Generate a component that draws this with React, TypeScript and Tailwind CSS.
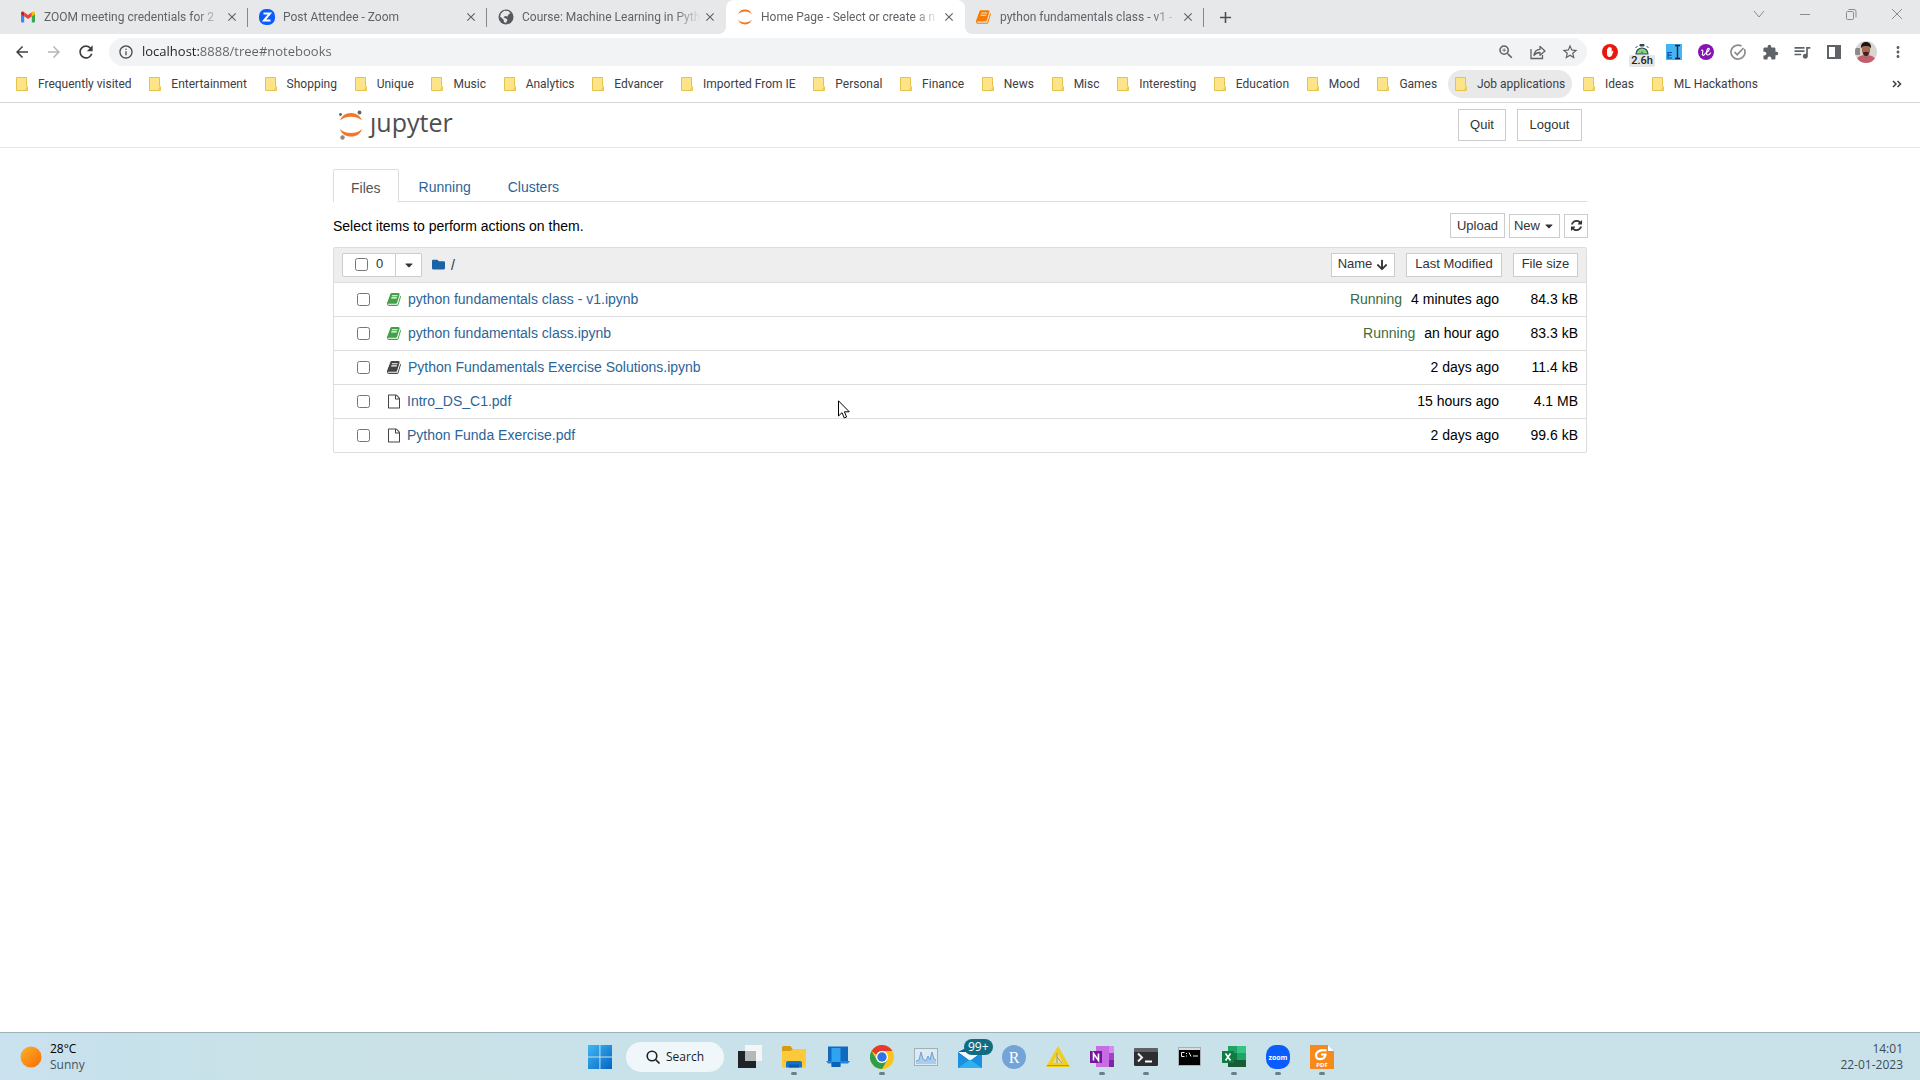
import { useState } from "react";
import type { ReactNode } from "react";
import clsx from "clsx";
import { FaArrowDown, FaCaretDown, FaFolder } from "react-icons/fa";
import {
  MdAdd,
  MdArrowBack,
  MdArrowForward,
  MdClose,
  MdExtension,
  MdInfoOutline,
  MdMoreVert,
  MdPublic,
  MdQueueMusic,
  MdRefresh,
  MdStarBorder,
  MdZoomIn,
} from "react-icons/md";

/* ---------- icons ---------- */

const BOOK =
  "M1639 478q40 57 18 129l-275 906q-19 64-76.5 107.5t-122.5 43.5h-923q-77 0-148.5-53.5t-99.5-131.5q-24-67-2-127 0-4 3-27t4-37q1-8-3-21.5t-3-19.5q2-11 8-21t16.5-23.5 16.5-23.5q23-38 45-91.5t30-91.5q3-10 .5-30t-.5-28q3-11 17-28t17-23q21-36 42-92t25-90q1-9-2.5-32t.5-28q4-13 22-30.5t22-22.5q19-26 42.5-84.5t27.5-96.5q1-8-3-25.5t-2-26.5q2-8 9-18t18-23 17-21q8-12 16.5-30.5t15-35 16-36 19.5-32 26.5-23.5 36-11.5 47.5 5.5l-1 3q38-9 51-9h761q74 0 114 56t18 130l-274 906q-36 119-71.5 153.5t-128.5 34.5h-869q-27 0-38 15-11 16-1 43 24 70 144 70h923q29 0 56-15.5t35-41.5l300-987q7-22 5-57 38 15 59 43zm-1064 2q-4 13 2 22.5t20 9.5h608q13 0 25.5-9.5t16.5-22.5l21-64q4-13-2-22.5t-20-9.5h-608q-13 0-25.5 9.5t-16.5 22.5zm-83 256q-4 13 2 22.5t20 9.5h608q13 0 25.5-9.5t16.5-22.5l21-64q4-13-2-22.5t-20-9.5h-608q-13 0-25.5 9.5t-16.5 22.5z";
const FILE =
  "M1596 380q28 28 48 76t20 88v1152q0 40-28 68t-68 28h-1344q-40 0-68-28t-28-68v-1600q0-40 28-68t68-28h896q40 0 88 20t76 48zm-444-244v376h376q-10-29-22-41l-313-313q-12-12-41-22zm384 1528v-1024h-416q-40 0-68-28t-28-68v-416h-768v1536h1280z";
const REFRESH =
  "M1639 1056q0 5-1 7-64 268-268 434.5t-478 166.5q-146 0-282.5-55t-243.5-157l-129 129q-19 19-45 19t-45-19-19-45v-448q0-26 19-45t45-19h448q26 0 45 19t19 45-19 45l-137 137q71 66 161 102t187 36q134 0 250-65t186-179q11-17 53-117 8-23 30-23h192q13 0 22.5 9.5t9.5 22.5zm25-800v448q0 26-19 45t-45 19h-448q-26 0-45-19t-19-45 19-45l138-138q-148-137-349-137-134 0-250 65t-186 179q-11 17-53 117-8 23-30 23h-199q-13 0-22.5-9.5t-9.5-22.5v-7q65-268 270-434.5t480-166.5q146 0 284 55.5t245 156.5l130-129q19-19 45-19t45 19 19 45z";

function Glyph({ d, className }: { d: string; className: string }) {
  return (
    <svg viewBox="0 0 1792 1792" fill="currentColor" className={className}>
      <path d={d} />
    </svg>
  );
}

function GmailIcon() {
  return (
    <svg viewBox="0 0 16 16" className="size-4 shrink-0">
      <path d="M1 4.500v8.200c0 .5.3.8.8.8h2.400V6.800z" fill="#4285f4" />
      <path d="M15 4.500v8.200c0 .5-.3.8-.8.8h-2.400V6.800z" fill="#34a853" />
      <path d="M4.200 3.200v4L8 10l3.800-2.800v-4L8 6z" fill="#ea4335" />
      <path d="M1 4.300v1L4.200 7.500V3.400l-.8-.6C2.400 2.100 1 2.800 1 4.300z" fill="#c5221f" />
      <path d="M15 4.300v1L11.800 7.500V3.400l.8-.6c1-.7 2.400 0 2.400 1.500z" fill="#fbbc04" />
    </svg>
  );
}

function ZoomFavicon() {
  return (
    <svg viewBox="0 0 16 16" className="size-4 shrink-0">
      <rect width="16" height="16" rx="7" fill="#0b5cff" />
      <path d="M4.500 4.500h6.500L5 11.500h6.500" fill="none" stroke="#fff" strokeWidth="2" />
    </svg>
  );
}

function GlobeFavicon() {
  return (
    <svg viewBox="0 0 16 16" className="size-4 shrink-0">
      <circle cx="8" cy="8" r="7.500" fill="#55595d" />
      <path d="M6 1.800l4 .2 2.500 2-2 1.500-1 2L7 7 5.500 8.500 8 9.500l1.500 1.200L8 14l-2-1-.5-2.500L2 7.500 3 4.500z" fill="#e7e8ea" />
    </svg>
  );
}

function JupyterFavicon() {
  return (
    <svg viewBox="0 0 16 16" className="size-4 shrink-0" fill="#f37726">
      <path d="M1 5.500C2.500 1.800 5 .6 8 .6s5.500 1.200 7 4.900C13 3.300 10.800 2.500 8 2.500s-5 .8-7 3z" />
      <path d="M1 10.500c1.500 3.700 4 4.900 7 4.900s5.500-1.200 7-4.900c-2 2.200-4.200 3-7 3s-5-.8-7-3z" />
    </svg>
  );
}

function JupyterLogo() {
  return (
    <svg viewBox="0 0 26 30" className="h-[30px] w-[26px]">
      <path d="M2 10.500C3.500 6 7.500 3 13 3s9.500 3 11 7.500C21.500 8 17.500 6.700 13 6.700S4.500 8 2 10.500z" fill="#f37726" />
      <path d="M2 19c1.500 5 5.500 7.500 11 7.500s9.500-2.500 11-7.500c-2.500 2.700-6.500 4-11 4s-8.500-1.300-11-4z" fill="#f37726" />
      <circle cx="2.500" cy="4.500" r="1.400" fill="#616262" />
      <circle cx="21.500" cy="2.500" r="1.900" fill="#616262" />
      <circle cx="4.500" cy="27.500" r="2.200" fill="#8a8a8a" />
    </svg>
  );
}

function ShareIcon() {
  return (
    <svg viewBox="0 0 16 16" className="size-4" fill="none" stroke="#5f6368" strokeWidth="1.300">
      <path d="M1 5v9.500h11.500V11" />
      <path d="M4 11.500c.4-4 2.600-6 6-6.200V2.500L15 7l-5 4.300V8.500c-2.600 0-4.500.8-6 3z" strokeLinejoin="round" />
    </svg>
  );
}

function FolderIcon() {
  return (
    <svg viewBox="0 0 12 14" className="h-[14px] w-3 shrink-0">
      <path d="M.5.5h10v8.500l1 1v3.500H.5z" fill="#fde488" stroke="#e5c34c" />
      <path d="M9.500 13.500V11l2-1.500v4z" fill="#f3cc50" />
    </svg>
  );
}

/* ---------- browser tabs ---------- */

const tabs = [
  { title: "ZOOM meeting credentials for 2", icon: <GmailIcon /> },
  { title: "Post Attendee - Zoom", icon: <ZoomFavicon /> },
  { title: "Course: Machine Learning in Pyth", icon: <GlobeFavicon /> },
  { title: "Home Page - Select or create a n", icon: <JupyterFavicon />, active: true },
  { title: "python fundamentals class - v1 -", icon: <Glyph d={BOOK} className="size-4 shrink-0 text-[#f57c00]" /> },
];

function TabStrip() {
  return (
    <div className="flex h-[34px] bg-[#e7e8ea] pl-[9px]">
      {tabs.map((tab, i) => (
        <div
          key={tab.title}
          className={clsx(
            "relative flex w-[239px] items-center gap-2 pr-[9px] pl-[11px]",
            tab.active &&
              "rounded-t-lg bg-white before:absolute before:bottom-0 before:-left-2 before:size-2 before:bg-[radial-gradient(circle_at_0_0,transparent_8px,white_8px)] after:absolute after:-right-2 after:bottom-0 after:size-2 after:bg-[radial-gradient(circle_at_100%_0,transparent_8px,white_8px)]",
          )}
        >
          {tab.icon}
          <span className="-mr-[6px] min-w-0 flex-1 overflow-hidden text-xs whitespace-nowrap text-[#5f6368] [mask-image:linear-gradient(to_right,black_85%,transparent)]">
            {tab.title}
          </span>
          <button aria-label="Close tab" className="text-[#5f6368]">
            <MdClose className="size-[14px]" />
          </button>
          {!tab.active && !tabs[i + 1]?.active && (
            <span className="absolute top-2 right-0 h-[19px] w-px bg-[#85888c]" />
          )}
        </div>
      ))}
      <button aria-label="New tab" className="ml-3 text-[#4b4f53]">
        <MdAdd className="size-[19px]" />
      </button>
      <div className="ml-auto flex h-7 text-[#8b8b8b]">
        <button aria-label="Search tabs" className="grid w-[46px] place-items-center">
          <svg viewBox="0 0 12 12" className="size-3" fill="none" stroke="currentColor">
            <path d="M1 3l5 6 5-6" />
          </svg>
        </button>
        <button aria-label="Minimize" className="grid w-[46px] place-items-center">
          <svg viewBox="0 0 12 12" className="size-3" fill="none" stroke="currentColor">
            <path d="M1 6.500h10" />
          </svg>
        </button>
        <button aria-label="Restore" className="grid w-[46px] place-items-center">
          <svg viewBox="0 0 12 12" className="size-3" fill="none" stroke="currentColor">
            <rect x="1.500" y="3.500" width="7" height="8" rx="1" />
            <path d="M3.500 1.500h5.500q2 0 2 2v6" />
          </svg>
        </button>
        <button aria-label="Close" className="grid w-[46px] place-items-center">
          <svg viewBox="0 0 12 12" className="size-3" fill="none" stroke="currentColor">
            <path d="M1 1l10 10M11 1L1 11" />
          </svg>
        </button>
      </div>
    </div>
  );
}

/* ---------- toolbar ---------- */

function ToolButton({ label, children }: { label: string; children: ReactNode }) {
  return (
    <button aria-label={label} className="relative grid h-7 w-8 shrink-0 place-items-center text-[#5f6368]">
      {children}
    </button>
  );
}

function Toolbar() {
  const [url, setUrl] = useState("localhost:8888/tree#notebooks");

  return (
    <div className="flex h-9 items-center bg-white px-[6px]">
      <ToolButton label="Back">
        <MdArrowBack className="size-[18px] text-[#3c4043]" />
      </ToolButton>
      <ToolButton label="Forward">
        <MdArrowForward className="size-[18px] text-[#b4b6b8]" />
      </ToolButton>
      <ToolButton label="Reload">
        <MdRefresh className="size-5 text-[#3c4043]" />
      </ToolButton>
      <div className="mx-[7px] flex h-7 flex-1 items-center rounded-full bg-[#f1f3f4] pr-px pl-[9px]">
        <MdInfoOutline className="size-4 text-[#4b4f53]" />
        <input
          aria-label="Address"
          value={url}
          onChange={(e) => setUrl(e.target.value)}
          className="ml-2 flex-1 bg-[linear-gradient(to_right,#202124_58px,#5f6368_58px)] bg-clip-text font-['Open_Sans',sans-serif] text-[13px] text-transparent caret-black outline-none"
        />
        <ToolButton label="Zoom">
          <MdZoomIn className="size-[18px]" />
        </ToolButton>
        <ToolButton label="Share this page">
          <ShareIcon />
        </ToolButton>
        <ToolButton label="Bookmark this tab">
          <MdStarBorder className="size-[18px]" />
        </ToolButton>
      </div>
      <ToolButton label="Ad blocker">
        <svg viewBox="0 0 16 16" className="size-4">
          <circle cx="8" cy="8" r="8" fill="#e8190c" />
          <path
            d="M5 8V5.200c0-.8 1-.8 1 0V4c0-.9 1.200-.9 1.200 0v-.7c0-.9 1.300-.9 1.300 0V4c0-.8 1.200-.8 1.200 0v4l.6-1c.5-.7 1.300-.2 1 .5l-1.200 3.600c-.4 1.100-1.200 1.900-2.600 1.900C5.700 13 5 11.600 5 10z"
            fill="#fff"
          />
        </svg>
      </ToolButton>
      <ToolButton label="Time tracker">
        <svg viewBox="0 0 16 16" className="size-4">
          <path d="M2 10a6 6 0 0 1 12 0z" fill="#8fd07f" stroke="#2c4a57" strokeWidth="1.200" />
          <path d="M6 10l2-3 2 3z" fill="#2f9e4a" />
          <path d="M6 .5h4v1.500H6zM1.500 4L3.500 2M14.500 4l-2-2" stroke="#2c4a57" strokeWidth="1" fill="#2c4a57" />
        </svg>
        <span className="absolute -bottom-px rounded-[2px] bg-[#e6e6e6] px-[2px] text-[11px] leading-[12px] font-medium text-[#222]">
          2.6h
        </span>
      </ToolButton>
      <ToolButton label="Text extension">
        <svg viewBox="0 0 16 16" className="size-4" fill="none">
          <path d="M0 0h16v16H0z" fill="#45b4f3" />
          <path d="M6 8.500H2v5.500h4M2 11.200h3.500" stroke="#164a9c" strokeWidth="1.200" />
          <path d="M9 1.500h5M9 14.500h5M11.500 1.500v13" stroke="#14213a" strokeWidth="1.400" />
        </svg>
      </ToolButton>
      <ToolButton label="Writing extension">
        <svg viewBox="0 0 16 16" className="size-4" fill="none">
          <circle cx="8" cy="8" r="8" fill="#8614b4" />
          <path
            d="M3.200 6.500c1.500-1 2 .2 1.400 2.200-.8 3 1 3.500 2.300 1.300 1.500-2 3.600-2 4.300-4.500.2-1.500-1-1.700-1.800-.3-1.200 2.200-1.400 5.800.3 5.800 1.300 0 2.300-1 3.100-2.500"
            stroke="#fff"
            strokeWidth="1.200"
          />
        </svg>
      </ToolButton>
      <ToolButton label="Checker">
        <svg viewBox="0 0 16 16" className="size-4" fill="none" stroke="#8a8c8f" strokeWidth="1.700">
          <path d="M14.300 5A7 7 0 1 1 11.500 2" />
          <path d="M4.500 8l2.700 2.700L13.500 4" />
        </svg>
      </ToolButton>
      <ToolButton label="Extensions">
        <MdExtension className="size-[17px]" />
      </ToolButton>
      <ToolButton label="Media control">
        <MdQueueMusic className="size-5" />
      </ToolButton>
      <ToolButton label="Side panel">
        <svg viewBox="0 0 16 16" className="size-4">
          <path d="M1 1h14v14H1zM3 3v10h6V3z" fill="#5f6368" fillRule="evenodd" />
        </svg>
      </ToolButton>
      <ToolButton label="Profile">
        <svg viewBox="0 0 22 22" className="size-[22px]">
          <clipPath id="avatar">
            <circle cx="11" cy="11" r="11" />
          </clipPath>
          <g clipPath="url(#avatar)">
            <path d="M0 0h22v22H0z" fill="#d9d5d2" />
            <path d="M0 7h5v7H0z" fill="#8d8a86" />
            <path d="M1 22c0-6 4-8 10-8s10 2 10 8z" fill="#c0606e" />
            <ellipse cx="11" cy="9" rx="4.200" ry="5.800" fill="#a8694f" />
            <path d="M6 7.500C5.500 3 8 1 11 1s5.500 2 5 6.500C15 5.500 13.500 5 11 5S7 5.500 6 7.500z" fill="#1b1514" />
            <path d="M8 11.500c2-1 4-1 6 0 0 2-1 3.500-3 3.500s-3-1.500-3-3.500z" fill="#3a2420" />
          </g>
        </svg>
      </ToolButton>
      <ToolButton label="Menu">
        <MdMoreVert className="size-[18px]" />
      </ToolButton>
    </div>
  );
}

/* ---------- bookmarks ---------- */

const bookmarks = [
  "Frequently visited",
  "Entertainment",
  "Shopping",
  "Unique",
  "Music",
  "Analytics",
  "Edvancer",
  "Imported From IE",
  "Personal",
  "Finance",
  "News",
  "Misc",
  "Interesting",
  "Education",
  "Mood",
  "Games",
  "Job applications",
  "Ideas",
  "ML Hackathons",
];

function BookmarksBar() {
  return (
    <div className="flex items-center border-b border-[#d5d7da] bg-white pr-[18px] pb-1 pl-[9px]">
      <div className="mr-[127px] flex flex-1 justify-between">
        {bookmarks.map((name) => (
          <button
            key={name}
            className={clsx(
              "flex h-7 items-center gap-[10px] rounded-full px-[7px] text-xs whitespace-nowrap text-[#3c4043]",
              name === "Job applications" && "bg-[#e9e9ea]",
            )}
          >
            <FolderIcon />
            {name}
          </button>
        ))}
      </div>
      <button aria-label="More bookmarks">
        <svg viewBox="0 0 10 8" className="h-2 w-[10px]" fill="none" stroke="#3c4043" strokeWidth="1.500">
          <path d="M1 1l3 3-3 3M5.500 1l3 3-3 3" />
        </svg>
      </button>
    </div>
  );
}

/* ---------- notebook page ---------- */

const files = [
  { name: "python fundamentals class - v1.ipynb", kind: "notebook", running: true, modified: "4 minutes ago", size: "84.3 kB" },
  { name: "python fundamentals class.ipynb", kind: "notebook", running: true, modified: "an hour ago", size: "83.3 kB" },
  { name: "Python Fundamentals Exercise Solutions.ipynb", kind: "notebook", running: false, modified: "2 days ago", size: "11.4 kB" },
  { name: "Intro_DS_C1.pdf", kind: "file", running: false, modified: "15 hours ago", size: "4.1 MB" },
  { name: "Python Funda Exercise.pdf", kind: "file", running: false, modified: "2 days ago", size: "99.6 kB" },
];

const btn = "flex items-center justify-center border border-[#ccc] bg-white text-[13px] font-normal text-[#333]";

function FileTable() {
  return (
    <div className="mt-[9px] rounded-[2px] border border-[#ddd]">
      <table className="w-full table-fixed text-sm text-black">
        <colgroup>
          <col />
          <col className="w-[102px]" />
          <col className="w-[84px]" />
        </colgroup>
        <thead>
          <tr className="h-[34px] border-b border-[#ddd] bg-[#eee]">
            <th className="p-0">
              <div className="flex items-center pr-[5px] pl-2">
                <div className="flex">
                  <label className={clsx(btn, "h-6 w-[54px] gap-2 rounded-l-[2px]")}>
                    <input type="checkbox" className="size-[13px]" />0
                  </label>
                  <button aria-label="Select by type" className={clsx(btn, "h-6 w-[26px] rounded-r-[2px] border-l-0")}>
                    <FaCaretDown className="size-3" />
                  </button>
                </div>
                <a href="#root" aria-label="Home folder" className="ml-[10px] text-[#1a63a5]">
                  <FaFolder className="size-[13px]" />
                </a>
                <span className="ml-[6px] font-normal text-[#333]">/</span>
                <button className={clsx(btn, "ml-auto h-6 w-16 gap-1")}>
                  Name
                  <FaArrowDown className="size-3" />
                </button>
              </div>
            </th>
            <th className="p-0">
              <button className={clsx(btn, "ml-auto h-6 w-24")}>Last Modified</button>
            </th>
            <th className="p-0 pr-2">
              <button className={clsx(btn, "ml-auto h-6 w-[65px]")}>File size</button>
            </th>
          </tr>
        </thead>
        <tbody>
          {files.map((file) => (
            <tr key={file.name} className="h-[34px] border-b border-[#ddd] last:border-b-0">
              <td className="p-0">
                <div className="flex items-center pl-[23px]">
                  <input type="checkbox" aria-label={file.name} className="size-[13px]" />
                  <Glyph
                    d={file.kind === "notebook" ? BOOK : FILE}
                    className={clsx(
                      "mr-[6px] ml-[17px]",
                      file.kind === "notebook" ? "size-[15px]" : "h-[15px] w-[14px]",
                      file.running ? "text-[#43a047]" : "text-[#444]",
                    )}
                  />
                  <a href="#notebooks" className="text-[#2c6497]">
                    {file.name}
                  </a>
                </div>
              </td>
              <td className="p-0">
                <div className="flex justify-end gap-[9px] pr-[3px] whitespace-nowrap">
                  {file.running && <span className="text-[#3c6b40]">Running</span>}
                  <span>{file.modified}</span>
                </div>
              </td>
              <td className="p-0 pr-2 text-right">{file.size}</td>
            </tr>
          ))}
        </tbody>
      </table>
    </div>
  );
}

function NotebookPage() {
  return (
    <div className="flex-1 bg-white font-['Liberation_Sans',Arial,sans-serif]">
      <header className="border-b border-[#e7e7e7]">
        <div className="mx-auto flex h-11 max-w-[1254px] items-center px-[5px]">
          <a href="#tree" className="flex items-center gap-[6px] text-[#4e4e4e]">
            <JupyterLogo />
            <span className="pb-[6px] font-['Open_Sans','Noto_Sans',sans-serif] text-[25px] leading-8">
              <span className="relative before:absolute before:top-[6px] before:left-0 before:h-[6px] before:w-[7px] before:bg-white">
                j
              </span>
              upyter
            </span>
          </a>
          <button className={clsx(btn, "ml-auto h-8 w-12")}>Quit</button>
          <button className={clsx(btn, "ml-[11px] h-8 w-[65px]")}>Logout</button>
        </div>
      </header>
      <main className="mx-auto max-w-[1254px] pt-[21px]">
        <nav className="flex h-[33px] gap-[3px] border-b border-[#ddd] text-sm">
          <a href="#notebooks" className="-mb-px flex items-center rounded-t-[2px] border border-b-0 border-[#ddd] bg-white px-[17px] pt-[3px] text-[#555]">
            Files
          </a>
          <a href="#running" className="flex items-center px-[17px] pt-1 text-[#2c6497]">
            Running
          </a>
          <a href="#clusters" className="flex items-center px-[17px] pt-1 text-[#2c6497]">
            Clusters
          </a>
        </nav>
        <div className="mt-[11px] -mr-px flex items-center gap-1">
          <p className="mr-auto text-sm text-black">Select items to perform actions on them.</p>
          <button className={clsx(btn, "h-[25px] w-[55px]")}>Upload</button>
          <button className={clsx(btn, "h-6 w-[51px] gap-[3px]")}>
            New
            <FaCaretDown className="size-3" />
          </button>
          <button aria-label="Refresh" className={clsx(btn, "h-6 w-6")}>
            <Glyph d={REFRESH} className="size-[13px]" />
          </button>
        </div>
        <FileTable />
      </main>
    </div>
  );
}

/* ---------- taskbar ---------- */

function TaskButton({ label, open, children }: { label: string; open?: boolean; children: ReactNode }) {
  return (
    <button aria-label={label} className="relative grid h-[47px] w-11 place-items-center">
      <svg viewBox="0 0 24 24" className="size-6">
        {children}
      </svg>
      {open && <span className="absolute bottom-[5px] h-[3px] w-[6px] rounded-full bg-[#6b7f8a]" />}
    </button>
  );
}

function Taskbar() {
  return (
    <footer className="grid grid-cols-[1fr_auto_1fr] items-center border-t border-[#9fb1b6] bg-[linear-gradient(to_right,#cbe1ef,#c7e1ec_6%,#c9e2e7_15%,#c9e1ea_50%,#c9e2e9)] font-['Open_Sans',sans-serif] text-xs leading-4">
      <button className="flex items-center gap-2 pl-5 text-left">
        <svg viewBox="0 0 22 22" className="size-[22px]">
          <linearGradient id="sun" x1="0" y1="0" x2="1" y2="1">
            <stop stopColor="#fbb324" />
            <stop offset="1" stopColor="#f96a06" />
          </linearGradient>
          <circle cx="11" cy="11" r="10.500" fill="url(#sun)" />
        </svg>
        <span className="flex flex-col">
          <span className="text-black">28°C</span>
          <span className="text-[#46545c]">Sunny</span>
        </span>
      </button>

      <div className="flex items-center pl-[2px]">
        <TaskButton label="Start">
          <linearGradient id="win" x1="0" y1="0" x2="1" y2="1">
            <stop stopColor="#3fb8f2" />
            <stop offset="1" stopColor="#0465c4" />
          </linearGradient>
          <path d="M0 0h11.400v11.400H0zM12.400 0H24v11.400H12.400zM0 12.400h11.400V24H0zM12.400 12.400H24V24H12.400z" fill="url(#win)" />
        </TaskButton>
        <button className="mx-1 flex h-[30px] w-[98px] items-center justify-center gap-[6px] rounded-full bg-[#f0f7fb] text-[#1b1b1b]">
          <svg viewBox="0 0 14 14" className="size-[14px]" fill="none" stroke="#222" strokeWidth="1.600">
            <circle cx="6" cy="6" r="4.800" />
            <path d="M9.500 9.500L13.500 13.500" />
          </svg>
          Search
        </button>
        <TaskButton label="Task view">
          <path d="M7 0h17v16H7z" fill="#f3f5f6" />
          <path d="M0 6h18v17H0z" fill="#1f2327" />
          <path d="M7 6h11v10H7z" fill="#b5b8ba" />
        </TaskButton>
        <TaskButton label="File Explorer" open>
          <path d="M0 2.500Q0 1 1.500 1h7l2 3H24v16H0z" fill="#d99a13" />
          <path d="M0 6h8.500L11 4h12q1 0 1 1v17.500H0z" fill="#fbc93a" />
          <path d="M4 22.500V18q0-2 2-2h12q2 0 2 2v4.500z" fill="#1374c9" />
          <path d="M7 19.500h10v3H7z" fill="#0b5aa6" />
        </TaskButton>
        <TaskButton label="Phone Link">
          <path d="M2 1.500h20V17H2z" fill="#1168bd" />
          <path d="M0 16h24l-2 2.500H2z" fill="#1d86dd" />
          <path d="M5.500 3h9v18.500h-9z" fill="#2ea3f0" />
          <path d="M5.500 17h9v5h-9z" fill="#0b63b5" />
        </TaskButton>
        <TaskButton label="Chrome" open>
          <circle cx="12" cy="12" r="12" fill="#f9c51d" />
          <path d="M1.600 6A12 12 0 0 1 22.400 6H12a6 6 0 0 0-5.500 3.700z" fill="#e33b2e" />
          <path d="M1.600 6A12 12 0 0 0 12 24l5.200-9L12 18a6 6 0 0 1-5.200-3z" fill="#2f9e4a" />
          <circle cx="12" cy="12" r="6" fill="#fff" />
          <circle cx="12" cy="12" r="4.700" fill="#2f73e4" />
        </TaskButton>
        <TaskButton label="Performance Monitor">
          <rect x=".5" y="3.500" width="23" height="17" fill="#dfe9f2" stroke="#a4b0b8" />
          <path d="M2 19v-3l3-1 2-8 2 7 3 2 2-5 2 4 2-8 2 7 2 1v4z" fill="#a9cdf0" />
          <path d="M2 16l3-1 2-8 2 7 3 2 2-5 2 4 2-8 2 7 2 1" fill="none" stroke="#6ea3d8" />
        </TaskButton>
        <div className="relative">
          <TaskButton label="Mail">
            <path d="M0 7l12-6 12 6v16H0z" fill="#0a5aa8" />
            <path d="M0 7h24L12 16z" fill="#f4f9fc" />
            <path d="M0 7.500L12 16l12-8.500V23H0z" fill="#1b8fe0" />
            <path d="M0 23l12-8.500L24 23z" fill="#2fb0f0" />
          </TaskButton>
          <span className="absolute top-[6px] left-4 rounded-full bg-[#126c80] px-1 text-white">99+</span>
        </div>
        <TaskButton label="R">
          <circle cx="12" cy="12" r="12" fill="#74a3d8" />
          <text x="12" y="17.500" textAnchor="middle" fontSize="16" fontFamily="Liberation Serif, serif" fill="#fff">
            R
          </text>
        </TaskButton>
        <TaskButton label="Analyzer">
          <path d="M12 1L24 22H0z" fill="#f0cf1c" />
          <path d="M12 8l5 10H7z" fill="#e3dca8" />
          <path d="M11 8v10M11 12l5 6M1 20.500h22" stroke="#a39a55" fill="none" />
        </TaskButton>
        <TaskButton label="OneNote" open>
          <path d="M6 1h18v21H6z" fill="#c86ce4" />
          <path d="M19 1h5v7h-5z" fill="#d58bee" />
          <path d="M19 8h5v7h-5z" fill="#a341c9" />
          <path d="M19 15h5v7h-5z" fill="#7a25a8" />
          <path d="M0 6h12v12H0z" fill="#75159c" />
          <path d="M3.500 15.500V8.500L8.500 15.500V8.500" stroke="#fff" strokeWidth="1.600" fill="none" />
        </TaskButton>
        <TaskButton label="Terminal" open>
          <rect y="3" width="24" height="18" rx="1.500" fill="#2c2e31" />
          <path d="M1.500 3h21q1.500 0 1.500 1.500V7H0V4.500Q0 3 1.500 3z" fill="#5f6265" />
          <path d="M4 8.500l4 4-4 4" stroke="#eee" strokeWidth="2" fill="none" />
          <path d="M11 16.500h7" stroke="#fff" strokeWidth="2" />
        </TaskButton>
        <TaskButton label="Command Prompt">
          <path d="M.5 2.500h22v18H.5z" fill="#000" stroke="#a9b0b4" />
          <path d="M1 3h21v2H1z" fill="#d8dcde" />
          <path d="M6.500 7.500H3.500v4h3M8.500 8v1M8.500 10.500v1M11 7.500l2 4M15 11h5" stroke="#eee" fill="none" />
        </TaskButton>
        <TaskButton label="Excel" open>
          <path d="M6 1h18v21H6z" fill="#21a366" />
          <path d="M15 1h9v7h-9z" fill="#33c481" />
          <path d="M6 8h9v7H6z" fill="#107c41" />
          <path d="M6 15h18v7H6z" fill="#185c37" />
          <path d="M0 6h12v12H0z" fill="#107c41" />
          <path d="M3.500 8.500l5 7M8.500 8.500l-5 7" stroke="#fff" strokeWidth="1.600" />
        </TaskButton>
        <TaskButton label="Zoom" open>
          <rect width="24" height="24" rx="10" fill="#0b5cff" />
          <text x="12" y="14.500" textAnchor="middle" fontSize="7" fontWeight="700" fontFamily="Open Sans, sans-serif" fill="#fff">
            zoom
          </text>
        </TaskButton>
        <TaskButton label="Foxit PDF" open>
          <path d="M0 0h18l6 6v18H0z" fill="#f68a1c" />
          <path d="M18 0l6 6h-6z" fill="#fff" />
          <path d="M16.500 5.500C11 4 6 6.500 6 10.500c0 5 8.500 5 9.500-1h-4.500" stroke="#fff" strokeWidth="2.200" fill="none" />
          <text x="12" y="22" textAnchor="middle" fontSize="6" fontWeight="700" fontFamily="Open Sans, sans-serif" fill="#fff">
            PDF
          </text>
        </TaskButton>
      </div>

      <button className="ml-auto flex flex-col items-end pr-[17px] text-[#3f4c54]">
        <span>14:01</span>
        <span>22-01-2023</span>
      </button>
    </footer>
  );
}

function Cursor() {
  return (
    <svg viewBox="0 0 12 19" className="pointer-events-none absolute top-[400px] left-[838px] h-[19px] w-3">
      <path d="M.5.8v15.200l3.500-3.300 2.300 5.300 2.300-1-2.200-5.200h4.900z" fill="#fff" stroke="#000" />
    </svg>
  );
}

export default function App() {
  return (
    <div className="relative flex min-h-screen flex-col font-[Roboto,sans-serif]">
      <TabStrip />
      <Toolbar />
      <BookmarksBar />
      <NotebookPage />
      <Taskbar />
      <Cursor />
    </div>
  );
}
